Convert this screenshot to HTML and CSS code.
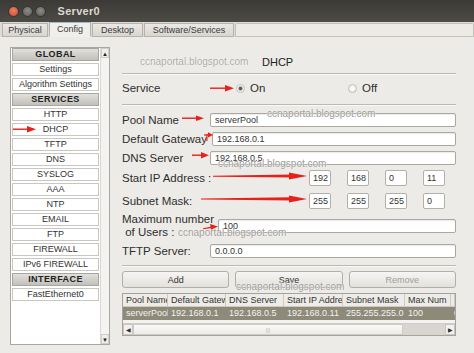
FILE: index.html
```html
<!DOCTYPE html>
<html lang="en">
<head>
    <meta charset="UTF-8">
    <title>Server0</title>
    <link rel="stylesheet" href="styles.css">
</head>
<body>
    <div class="window">
        <div class="titlebar">
            <span class="wbtn close"></span>
            <span class="wbtn"></span>
            <span class="wbtn"></span>
            <span class="title">Server0</span>
        </div>

        <div class="tabs">
            <div class="tab tab-physical">Physical</div>
            <div class="tab tab-config active">Config</div>
            <div class="tab tab-desktop">Desktop</div>
            <div class="tab tab-software">Software/Services</div>
            <div class="tab-fill"></div>
        </div>

        <div class="content">
            <div class="sidebar">
                <div class="list">
                    <div class="items">
                        <div class="item group">GLOBAL</div>
                        <div class="item">Settings</div>
                        <div class="item">Algorithm Settings</div>
                        <div class="item group">SERVICES</div>
                        <div class="item">HTTP</div>
                        <div class="item">DHCP</div>
                        <div class="item">TFTP</div>
                        <div class="item">DNS</div>
                        <div class="item">SYSLOG</div>
                        <div class="item">AAA</div>
                        <div class="item">NTP</div>
                        <div class="item">EMAIL</div>
                        <div class="item">FTP</div>
                        <div class="item">FIREWALL</div>
                        <div class="item">IPv6 FIREWALL</div>
                        <div class="item group">INTERFACE</div>
                        <div class="item">FastEthernet0</div>
                    </div>
                    <div class="vscroll">
                        <span class="sbtn">&#9650;</span>
                        <span class="sbtn">&#9660;</span>
                    </div>
                </div>
            </div>

            <div class="main">
                <div class="head">DHCP</div>
                <div class="hr"></div>

                <div class="service">
                    <span class="service-label">Service</span>
                    <label class="radio-opt on"><span class="radio checked"></span>On</label>
                    <label class="radio-opt"><span class="radio"></span>Off</label>
                </div>
                <div class="hr"></div>

                <div class="form">
                    <div class="row">
                        <span class="lbl">Pool Name</span>
                        <div class="input">serverPool</div>
                    </div>
                    <div class="row">
                        <span class="lbl lbl-gw">Default Gateway</span>
                        <div class="input">192.168.0.1</div>
                    </div>
                    <div class="row">
                        <span class="lbl">DNS Server</span>
                        <div class="input">192.168.0.5</div>
                    </div>
                    <div class="row row-ip">
                        <span class="lbl lbl-ip">Start IP Address :</span>
                        <div class="octets">
                            <div class="octet">192</div>
                            <div class="octet">168</div>
                            <div class="octet">0</div>
                            <div class="octet">11</div>
                        </div>
                    </div>
                    <div class="row row-mask">
                        <span class="lbl lbl-ip">Subnet Mask:</span>
                        <div class="octets">
                            <div class="octet">255</div>
                            <div class="octet">255</div>
                            <div class="octet">255</div>
                            <div class="octet">0</div>
                        </div>
                    </div>
                    <div class="row row-max">
                        <span class="lbl lbl-max">Maximum number<br>&nbsp;of Users :</span>
                        <div class="input">100</div>
                    </div>
                    <div class="row row-tftp">
                        <span class="lbl">TFTP Server:</span>
                        <div class="input">0.0.0.0</div>
                    </div>
                </div>
                <div class="hr"></div>

                <div class="buttons">
                    <button class="btn">Add</button>
                    <button class="btn">Save</button>
                    <button class="btn disabled">Remove</button>
                </div>

                <div class="table">
                    <div class="trow thead">
                        <span class="c1">Pool Name</span>
                        <span class="c2">Default Gateway</span>
                        <span class="c3">DNS Server</span>
                        <span class="c4">Start IP Address</span>
                        <span class="c5">Subnet Mask</span>
                        <span class="c6">Max Num</span>
                        <span class="c7">TFTP Server</span>
                    </div>
                    <div class="trow selected">
                        <span class="c1">serverPool</span>
                        <span class="c2">192.168.0.1</span>
                        <span class="c3">192.168.0.5</span>
                        <span class="c4">192.168.0.11</span>
                        <span class="c5">255.255.255.0</span>
                        <span class="c6">100</span>
                        <span class="c7">0.0.0.0</span>
                    </div>
                    <div class="hscroll">
                        <span class="hbtn">&#9664;</span>
                        <span class="thumb">|||</span>
                        <span class="track"></span>
                        <span class="hbtn">&#9654;</span>
                    </div>
                </div>
            </div>
        </div>

        <!-- annotations drawn over the screenshot -->
        <span class="mark m1">ccnaportal.blogspot.com</span>
        <span class="mark m2">ccnaportal.blogspot.com</span>
        <span class="mark m3">ccnaportal.blogspot.com</span>
        <span class="mark m4">ccnaportal.blogspot.com</span>
        <span class="mark m5">ccnaportal.blogspot.com</span>

        <svg class="arrows" width="474" height="353" viewBox="0 0 474 353">
            <g fill="#e8201c" stroke="none">
                <rect x="13" y="128.5" width="16" height="1.4"/>
                <polygon points="27,126 36,129.2 27,132.4"/>

                <rect x="210" y="87.5" width="17" height="1.4"/>
                <polygon points="225,85 234,88.2 225,91.4"/>

                <rect x="182" y="117.5" width="16" height="1.4"/>
                <polygon points="196,115.5 204,118.2 196,121"/>

                <rect x="204" y="134.4" width="5" height="1.2"/>
                <rect x="206.3" y="134" width="1.2" height="7"/>
                <polygon points="208,132.2 213,134.9 208,137.6"/>

                <rect x="192" y="154.5" width="11" height="1.4"/>
                <polygon points="201,152 209,155.2 201,158.4"/>

                <polygon points="213,175.7 292,174.6 292,177.6 213,176.7"/>
                <polygon points="289,172.5 307,176 289,179.5"/>

                <polygon points="201,198.4 292,197.3 292,200.5 201,199.4"/>
                <polygon points="289,195.4 307,199 289,202.6"/>

                <polygon points="203,228.2 212,226.5 212,227.9 203,229.3"/>
                <polygon points="210,224 218,226.5 211,229.8"/>
            </g>
        </svg>
    </div>
</body>
</html>
```

FILE: styles.css
```css
* {
    margin: 0;
    padding: 0;
    box-sizing: border-box;
}

body {
    width: 474px;
    height: 353px;
    overflow: hidden;
    background: #edebe7;
    font-family: "Liberation Sans", Arial, sans-serif;
    color: #2e2e2e;
}

.window {
    position: relative;
    height: 353px;
}

/* title bar */
.titlebar {
    height: 22px;
    background: linear-gradient(#3b3a36, #4c4b46);
    display: flex;
    align-items: center;
    padding-left: 8px;
}

.wbtn {
    width: 11px;
    height: 11px;
    border-radius: 50%;
    margin-right: 2.5px;
    background: radial-gradient(circle at 50% 40%, #8c8b85, #5c5b56);
    border: 1px solid #35342f;
}

.wbtn.close {
    background: radial-gradient(circle at 50% 40%, #ec8264, #c9482a);
}

.title {
    margin-left: 9px;
    color: #dcd8cf;
    font-weight: bold;
    font-size: 11px;
    letter-spacing: 0.3px;
}

/* tabs */
.tabs {
    height: 15px;
    display: flex;
    align-items: flex-end;
    padding-left: 2px;
    background: #dedbd6;
}

.tab {
    height: 14px;
    border: 1px solid #b6b3ad;
    background: linear-gradient(#ebe9e5, #d9d6d1);
    font-size: 9px;
    line-height: 12px;
    color: #3a3a3a;
    text-align: center;
    margin-right: 1px;
}

.tab-physical { width: 46px; }
.tab-config { width: 42px; }
.tab-desktop { width: 51px; }
.tab-software { width: 90px; }

.tab.active {
    height: 15px;
    background: #f1efec;
    border-top-color: #a4b8d2;
    border-bottom-color: #f1efec;
}

.tab-fill {
    flex: 1;
    height: 14px;
    border: 1px solid #c3c0ba;
    border-radius: 2px 2px 0 0;
    background: #edeae6;
}

/* content */
.content {
    display: flex;
    height: 316px;
}

.sidebar {
    padding: 10px 0 0 10px;
}

.list {
    width: 100px;
    height: 298px;
    border: 1px solid #a9a7a2;
    background: #fff;
    display: flex;
}

.items {
    width: 88px;
    padding: 0 0 0 1px;
    display: flex;
    flex-direction: column;
    gap: 2px;
}

.item {
    height: 13px;
    border: 1px solid #c9c7c2;
    background: #fff;
    text-align: center;
    font-size: 9px;
    line-height: 11px;
    color: #333;
    white-space: nowrap;
}

.item.group {
    background: linear-gradient(#e2e0dc, #c2c0bb);
    border-color: #a8a6a1;
    font-weight: bold;
    letter-spacing: 0.4px;
    color: #222;
}

.vscroll {
    flex: 1;
    margin-left: 1px;
    border-left: 1px solid #dad8d3;
    background: #f4f3f1;
    display: flex;
    flex-direction: column;
    justify-content: space-between;
}

.sbtn {
    height: 10px;
    font-size: 6px;
    line-height: 10px;
    text-align: center;
    color: #222;
    background: #efeeec;
    border: 1px solid #cfcdc8;
}

/* main form */
.main {
    margin-left: 12px;
    width: 334px;
    display: flex;
    flex-direction: column;
}

.head {
    margin-top: 18px;
    height: 15px;
    line-height: 15px;
    padding-left: 140px;
    font-size: 11px;
    color: #222;
}

.hr {
    margin-top: 3px;
    border-top: 1px solid #bcb8b2;
    border-bottom: 1px solid #faf9f7;
}

.service {
    height: 26px;
    display: flex;
    align-items: center;
    font-size: 11.5px;
}

.service-label {
    width: 114px;
}

.radio-opt {
    display: flex;
    align-items: center;
    gap: 5px;
}

.radio-opt.on {
    width: 112px;
}

.radio {
    width: 9px;
    height: 9px;
    border-radius: 50%;
    border: 1px solid #c2bfba;
    background: radial-gradient(#ffffff, #e8e6e2);
}

.radio.checked {
    background: radial-gradient(#555 0, #666 1.5px, #f4f3f1 2.5px);
}

.form {
    padding-top: 4px;
    display: flex;
    flex-direction: column;
}

.row {
    height: 19px;
    display: flex;
    align-items: center;
}

.row-ip { height: 22px; }
.row-mask { height: 23px; }
.row-max { height: 28px; }
.row-tftp { height: 22px; }

.lbl {
    width: 88px;
    font-size: 11.5px;
    color: #2e2e2e;
    white-space: nowrap;
}

.lbl-gw { width: 90px; }
.lbl-ip { width: 187px; }

.lbl-max {
    width: 96px;
    line-height: 13px;
}

.input {
    flex: 1;
    height: 14px;
    border: 1px solid #aba8a2;
    border-radius: 2px;
    background: #fff;
    box-shadow: inset 0 1px 1px rgba(0, 0, 0, 0.08);
    font-size: 9px;
    line-height: 12px;
    padding-left: 4px;
    color: #333;
}

.octets {
    display: flex;
    gap: 16px;
}

.octet {
    width: 22px;
    height: 16px;
    border: 1px solid #b3b0aa;
    border-radius: 2px;
    background: #fff;
    font-size: 9px;
    line-height: 14px;
    padding-left: 3px;
    color: #333;
}

.buttons {
    margin-top: 4px;
    display: flex;
    gap: 6px;
}

.btn {
    flex: 1;
    height: 17px;
    border: 1px solid #b2afa9;
    border-radius: 3px;
    background: linear-gradient(#f6f5f3, #e3e1dd);
    font-family: "Liberation Sans", Arial, sans-serif;
    font-size: 9px;
    color: #333;
}

.btn.disabled {
    color: #a09d98;
}

/* pool table */
.table {
    margin-top: 5px;
    border: 1px solid #a6a39d;
    background: #f4f3f1;
}

.trow {
    display: flex;
    height: 13px;
    font-size: 9px;
    line-height: 12px;
    white-space: nowrap;
}

.trow span {
    overflow: hidden;
    padding-left: 3px;
    flex-shrink: 0;
}

.thead {
    background: #eeece8;
    color: #333;
}

.thead span {
    border-right: 1px solid #cdcac4;
    border-bottom: 1px solid #cdcac4;
}

.selected {
    background: #8d8a7a;
    color: #f3f2ee;
}

.c1 { width: 45px; }
.c2 { width: 58px; }
.c3 { width: 58px; }
.c4 { width: 59px; }
.c5 { width: 62px; }
.c6 { width: 46px; }
.c7 { width: 4px; }

.hscroll {
    margin-top: 3px;
    height: 12px;
    display: flex;
    border-top: 1px solid #d0cdc8;
}

.hbtn {
    width: 10px;
    font-size: 6px;
    line-height: 11px;
    text-align: center;
    background: #f2f1ef;
    border: 1px solid #c9c6c1;
}

.thumb {
    width: 270px;
    font-size: 6px;
    line-height: 10px;
    text-align: center;
    color: #bbb8b3;
    background: linear-gradient(#fbfaf9, #ecebe8);
    border: 1px solid #cfccc7;
}

.track {
    flex: 1;
    background: #d9d6d1;
}

/* overlay annotations */
.mark {
    position: absolute;
    font-size: 10px;
    color: #9d9b97;
    white-space: nowrap;
    text-shadow: 0 0 1px #ffffff, 0 0 1px #ffffff;
}

.m1 { left: 140px; top: 56px; color: #aaa8a4; }
.m2 { left: 267px; top: 108px; }
.m3 { left: 218px; top: 158px; }
.m4 { left: 178px; top: 227px; }
.m5 { left: 236px; top: 281px; }

.arrows {
    position: absolute;
    left: 0;
    top: 0;
    pointer-events: none;
}
```
